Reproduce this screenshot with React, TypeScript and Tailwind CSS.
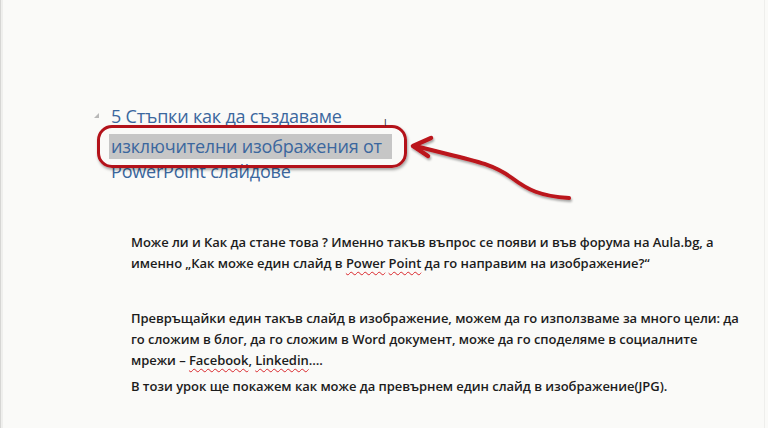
import React from 'react';

const bodyFont = { fontFamily: '"Open Sans", "Noto Sans", sans-serif' };

function Misspelled({ children }: { children: React.ReactNode }) {
  return (
    <span className="underline decoration-wavy decoration-[#d9262b] decoration-1 underline-offset-[3px]">
      {children}
    </span>
  );
}

export default function App() {
  return (
    <div className="relative h-[428px] w-[768px] overflow-hidden bg-[#fafaf8]">
      {/* page edges */}
      <div className="absolute inset-y-0 left-0 w-[3px] border-l border-[#d6d6d4] bg-[#efefed]" />
      <div className="absolute inset-y-0 right-[3px] w-px bg-[#eeeeec]" />

      <div className="pl-[111px] pt-[102px]" style={bodyFont}>
        {/* Heading */}
        <div className="relative text-[18px] tracking-[-0.2px] text-[#3b679e]">
          <span className="absolute -left-[17px] top-[11px] h-0 w-0 border-b-[5px] border-l-[5px] border-b-[#b8b8b8] border-l-transparent" />
          <div className="leading-[28px]">5 Стъпки как да създаваме</div>
          <div className="mt-[4px] leading-[24px]">
            <span className="-ml-[2px] bg-[#c6c6c6] pl-[2px] pr-[10px] pb-[1px]">изключителни изображения от</span>
          </div>
          <div className="leading-[26px]">PowerPoint слайдове</div>
        </div>

        {/* Body */}
        <div className="pl-[20px] pt-[48px] text-[13px] font-semibold leading-[21px] tracking-[-0.05px] text-[#1c1c1c]">
          <p>
            Може ли и Как да стане това ? Именно такъв въпрос се появи и във форума на Aula.bg, а
            <br />
            именно „Как може един слайд в <Misspelled>Power</Misspelled> <Misspelled>Point</Misspelled> да го направим на изображение?“
          </p>
          <p className="pt-[34px]">
            Превръщайки един такъв слайд в изображение, можем да го използваме за много цели: да
            <br />
            го сложим в блог, да го сложим в Word документ, може да го споделяме в социалните
            <br />
            мрежи – <Misspelled>Facebook</Misspelled>, <Misspelled>Linkedin</Misspelled>….
          </p>
          <p className="pt-[5px]">
            В този урок ще покажем как може да превърнем един слайд в изображение(JPG).
          </p>
        </div>
      </div>

      {/* Highlight annotation */}
      <div className="absolute left-[97px] top-[125px] h-[43px] w-[310px] rounded-[15px] border-[3px] border-[#b3121a] shadow-[1px_2px_3px_rgba(0,0,0,0.35)]" />
      {/* I-beam cursor */}
      <div className="absolute left-[384px] top-[119px] text-[9px] leading-none text-[#333]" style={{ fontFamily: '"DejaVu Sans", sans-serif' }}>
        I
      </div>

      {/* Arrow */}
      <svg className="absolute left-0 top-0" width="768" height="428" viewBox="0 0 768 428">
        <defs>
          <filter id="sh" x="-10%" y="-10%" width="120%" height="140%">
            <feDropShadow dx="1" dy="2" stdDeviation="1.2" floodColor="#000" floodOpacity="0.35" />
          </filter>
        </defs>
        <g filter="url(#sh)" stroke="#bb141c" strokeLinecap="round" strokeLinejoin="round" fill="none">
          <path d="M569 198 C540 196 528 190 512 178 C490 162 470 160 415 146" strokeWidth="4" />
          <path d="M431 138 L413 146 L428 156" strokeWidth="4.5" />
        </g>
      </svg>
    </div>
  );
}
